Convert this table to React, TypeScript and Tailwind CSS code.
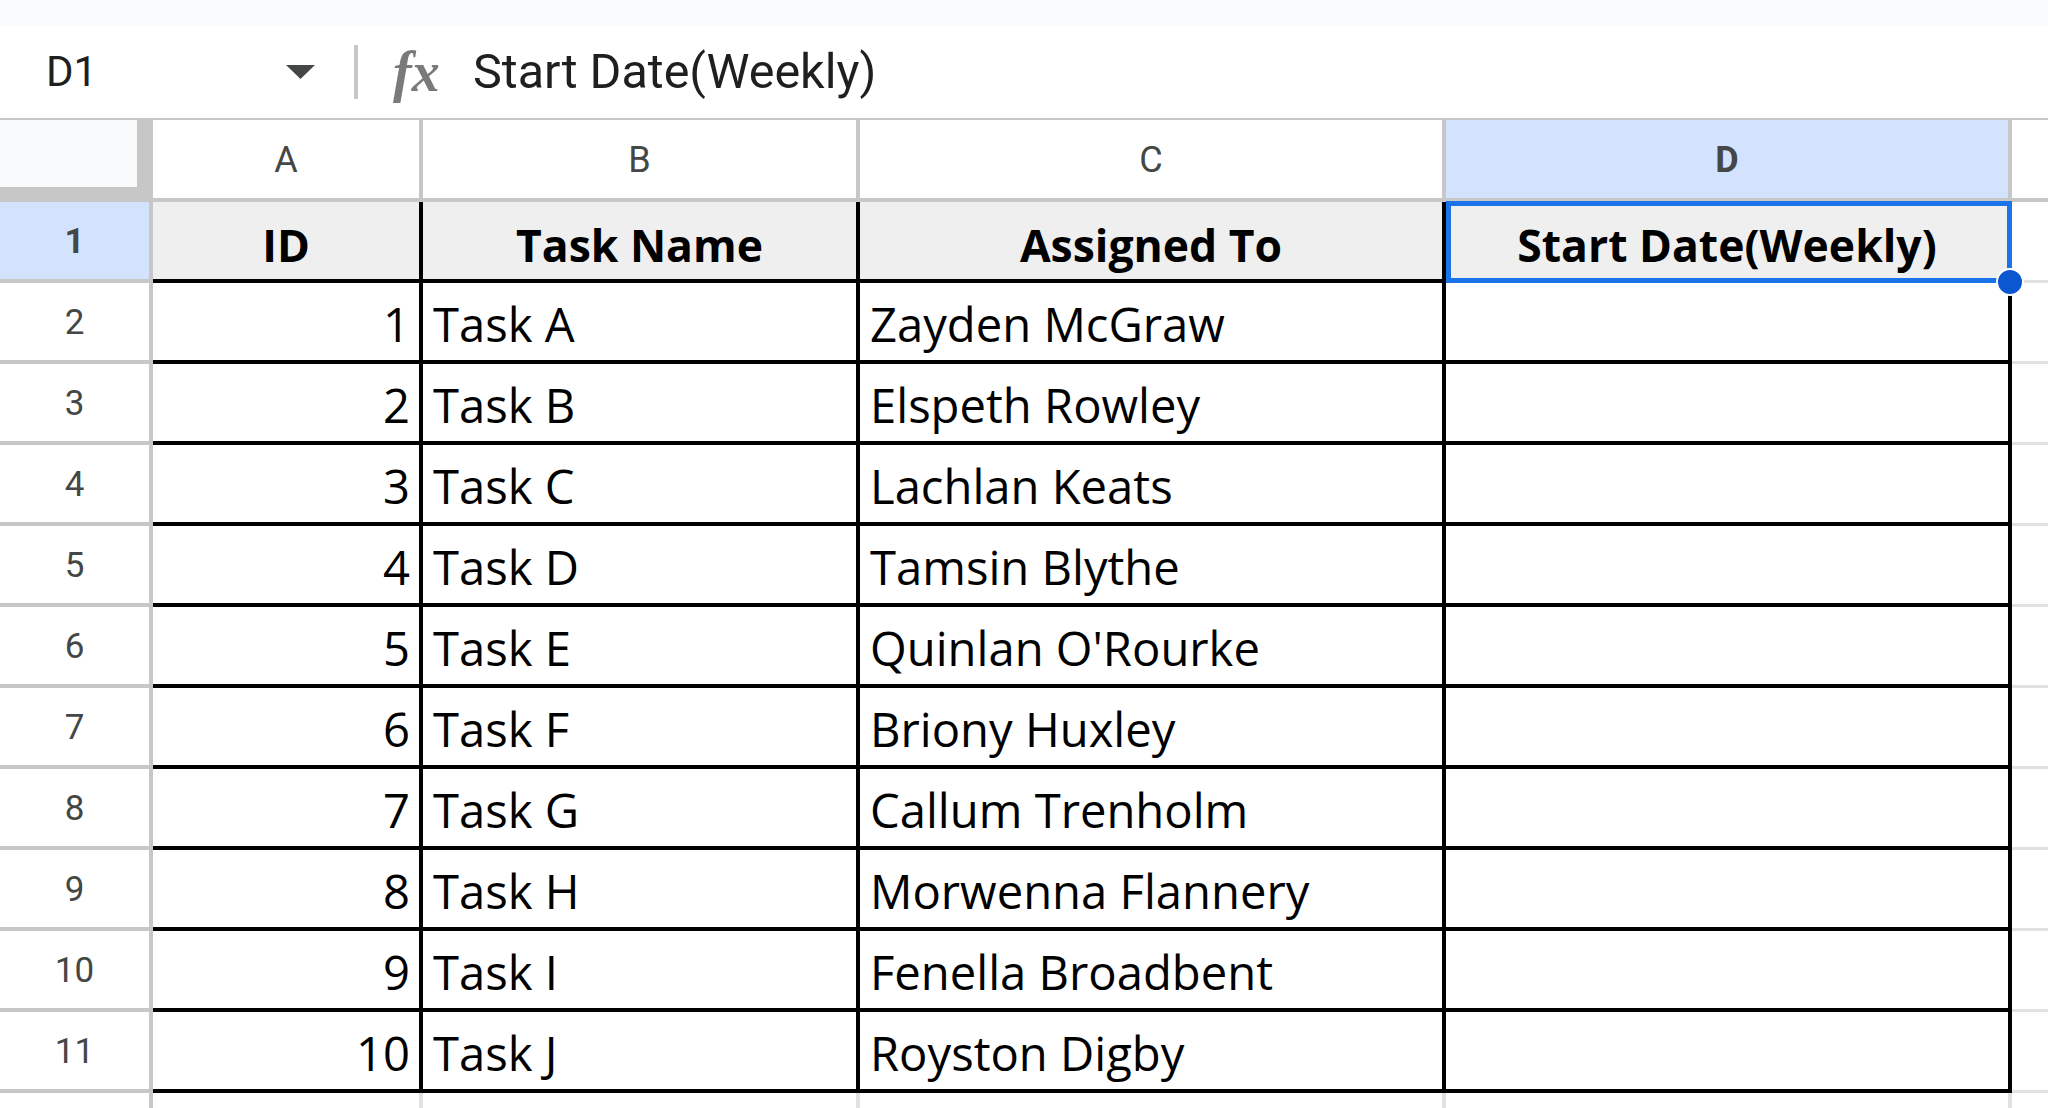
const tasks = [
  { id: 1, name: "Task A", person: "Zayden McGraw" },
  { id: 2, name: "Task B", person: "Elspeth Rowley" },
  { id: 3, name: "Task C", person: "Lachlan Keats" },
  { id: 4, name: "Task D", person: "Tamsin Blythe" },
  { id: 5, name: "Task E", person: "Quinlan O'Rourke" },
  { id: 6, name: "Task F", person: "Briony Huxley" },
  { id: 7, name: "Task G", person: "Callum Trenholm" },
  { id: 8, name: "Task H", person: "Morwenna Flannery" },
  { id: 9, name: "Task I", person: "Fenella Broadbent" },
  { id: 10, name: "Task J", person: "Royston Digby" },
];

const cols = "grid grid-cols-[153px_270px_437px_586px_566px_1fr]";
const headCell =
  "flex items-center justify-center border-r-4 border-b-4 border-[#c7c7c7] pt-[2px] text-[36px] text-[#444746]";
const rowHead =
  "flex items-center justify-center border-r-4 border-b-4 border-[#c7c7c7] pt-[4px] font-['Roboto',sans-serif] text-[35px] text-[#444746]";
const base =
  "flex items-end border-r-4 border-b-4 border-black pb-[12px] font-['Open_Sans',sans-serif] leading-none text-black";
const cell = `${base} text-[47.2px]`;
const titleCell = `${base} justify-center bg-[#efefef] text-[44.5px] font-bold`;

function FormulaBar() {
  return (
    <div className="flex h-[94px] items-center border-b-2 border-[#c7c7c7] font-['Roboto',sans-serif] text-[#1f1f1f]">
      <div className="flex w-[354px] items-center justify-between pl-[46px] pr-[39px]">
        <span className="text-[42px] leading-none">D1</span>
        <svg width="29" height="14" viewBox="0 0 29 14">
          <path d="M0 0h29L14.5 14z" fill="#444746" />
        </svg>
      </div>
      <div className="h-[54px] w-[4px] bg-[#c7c7c7]" />
      <div className="ml-[35px] w-[52px] font-['Liberation_Serif',serif] text-[56px] font-bold italic leading-none text-[#7a7a7a]">
        fx
      </div>
      <div className="ml-[28px] text-[48.5px] leading-none">Start Date(Weekly)</div>
    </div>
  );
}

export default function App() {
  return (
    <div className="relative h-[1108px] w-[2048px] overflow-hidden bg-white">
      <div className="h-[26px] bg-[#f9fbfd]" />
      <FormulaBar />

      <div className={`${cols} h-[82px] font-['Roboto',sans-serif]`}>
        <div className="bg-[#c7c7c7]">
          <div className="h-[67px] w-[137px] bg-[#f8f9fa]" />
        </div>
        <div className={headCell}>A</div>
        <div className={headCell}>B</div>
        <div className={headCell}>C</div>
        <div className={`${headCell} bg-[#d3e3fd] font-bold text-[#041e49]`}>D</div>
        <div className="border-b-4 border-[#c7c7c7]" />
      </div>

      <div className={`${cols} h-[81px]`}>
        <div className={`${rowHead} bg-[#d3e3fd] font-bold text-[#041e49]`}>1</div>
        <div className={titleCell}>ID</div>
        <div className={titleCell}>Task Name</div>
        <div className={titleCell}>Assigned To</div>
        <div className={`${titleCell} relative`}>
          Start Date(Weekly)
          <div className="absolute -top-[1px] left-0 -right-[4px] -bottom-[4px] z-10 border-[5px] border-[#1a73e8]" />
          <div className="absolute -right-[16px] -bottom-[17px] z-20 h-[28px] w-[28px] rounded-full border-2 border-white bg-[#0b57d0]" />
        </div>
        <div className="border-b-[3px] border-[#e1e1e1]" />
      </div>

      {tasks.map((t, i) => (
        <div key={t.id} className={`${cols} h-[81px]`}>
          <div className={rowHead}>{i + 2}</div>
          <div className={`${cell} justify-end pr-[9px]`}>{t.id}</div>
          <div className={`${cell} pl-[10px]`}>{t.name}</div>
          <div className={`${cell} pl-[10px]`}>{t.person}</div>
          <div className={cell} />
          <div className="border-b-[3px] border-[#e1e1e1]" />
        </div>
      ))}

      <div className={`${cols} h-[81px]`}>
        <div className="border-r-4 border-[#c7c7c7]" />
        <div className="border-r-4 border-[#e1e1e1]" />
        <div className="border-r-4 border-[#e1e1e1]" />
        <div className="border-r-4 border-[#e1e1e1]" />
        <div className="border-r-4 border-[#e1e1e1]" />
        <div />
      </div>
    </div>
  );
}
